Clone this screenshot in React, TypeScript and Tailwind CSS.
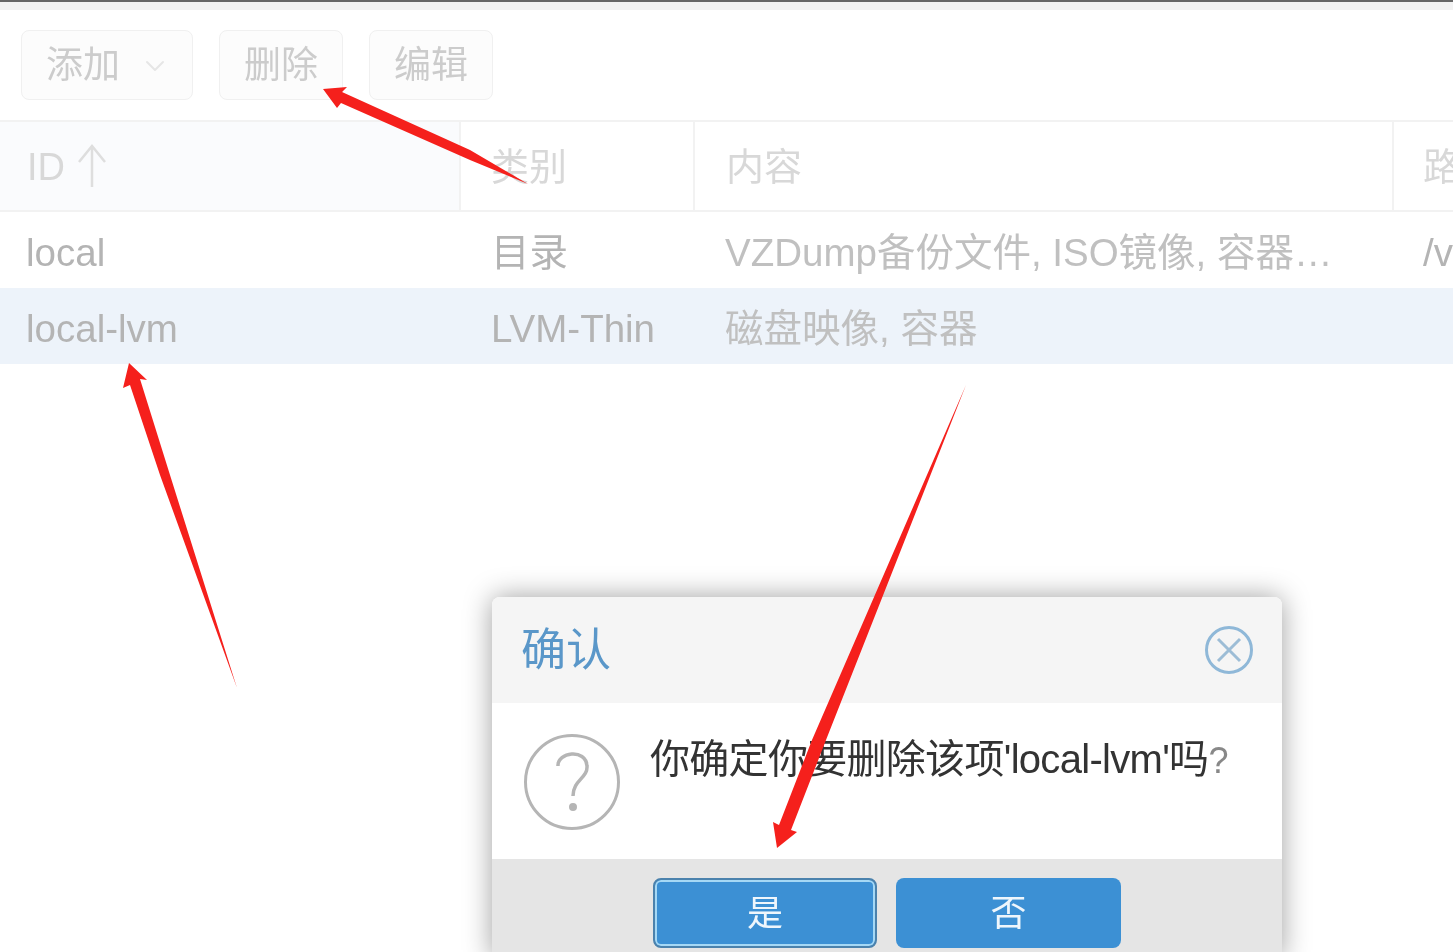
import { ChevronDown } from "lucide-react";

const gridCols = "grid grid-cols-[459px_234px_699px_1fr]";
const fontStack = "font-['Liberation_Sans','Noto_Sans_CJK_SC',sans-serif]";

function ToolButton({ label, arrow, width }: { label: string; arrow?: boolean; width: string }) {
  return (
    <div className={`${width} flex h-[70px] items-center rounded-lg border border-[#f0f0f0] bg-[#fcfcfc] pl-[24px] pt-[2px] text-[37px] text-[#cccccc]`}>
      <span>{label}</span>
      {arrow && <ChevronDown className="ml-[19px] h-[32px] w-[32px] text-[#e6e6e6]" strokeWidth={1.5} />}
    </div>
  );
}

function Row({ cells, selected }: { cells: string[]; selected?: boolean }) {
  return (
    <div className={`${gridCols} h-[76px] items-center pt-[5px] text-[38.5px] text-[#b4b4b4] ${selected ? "bg-[#edf3fa]" : "bg-white"}`}>
      <div className="overflow-hidden whitespace-nowrap pl-[26px]">{cells[0]}</div>
      <div className="overflow-hidden whitespace-nowrap pl-[32px]">{cells[1]}</div>
      <div className="overflow-hidden whitespace-nowrap pl-[32px] text-[#c0c0c0]">{cells[2]}</div>
      <div className="overflow-hidden whitespace-nowrap pl-[31px]">{cells[3]}</div>
    </div>
  );
}

function Arrows() {
  return (
    <svg className="absolute inset-0 z-20" width="1453" height="952" viewBox="0 0 1453 952">
      <polygon fill="#f5201c" points="323,89 347,87 342,92 470,150 528,184 470,160 341,103 337,108" />
      <polygon fill="#f5201c" points="129,363 147,380 140,379 170,475 237,688 160,475 130,385 123,388" />
      <polygon fill="#f5201c" points="966,385 826,740 791,830 797,832 777,848 773,822 779,825 812,740" />
    </svg>
  );
}

function ConfirmDialog() {
  return (
    <div className="absolute left-[492px] top-[597px] z-10 w-[790px] overflow-hidden rounded-t-lg shadow-[0_0_28px_rgba(0,0,0,0.38)]">
      <div className="flex h-[106px] items-center justify-between bg-[#f5f5f5] pl-[29px] pr-[28px]">
        <span className="pt-[2px] text-[45px] text-[#5a97c9]">确认</span>
        <svg width="50" height="50" viewBox="0 0 50 50" fill="none" stroke="#8fb8d8" strokeWidth="3">
          <circle cx="25" cy="25" r="22.5" />
          <path d="M14 14 L36 36 M36 14 L14 36" stroke="#9dbdd6" />
        </svg>
      </div>
      <div className="flex h-[156px] bg-white pl-[32px] pt-[31px]">
        <svg width="96" height="96" viewBox="0 0 96 96" fill="none" stroke="#b5b5b5" strokeWidth="3">
          <circle cx="48" cy="48" r="46.5" />
          <path d="M34 32 C33 18 62 14 63 32 C64 44 49 46 49 62" strokeWidth="3.5" />
          <circle cx="49" cy="73" r="2.5" fill="#b5b5b5" />
        </svg>
        <div className="ml-[30px] -mt-[2px] whitespace-nowrap text-[40px] leading-[54px] tracking-[-0.7px] text-[#333333]">
          你确定你要删除该项'local-lvm'吗<span className="text-[36px] text-[#888888]">?</span>
        </div>
      </div>
      <div className="flex h-[100px] justify-center gap-[19px] bg-[#e5e5e5] pt-[19px]">
        <div className="flex h-[70px] w-[224px] items-center justify-center rounded-lg border-2 border-[#4b82ad] bg-[#3c90d4] pt-[2px] text-[36px] text-[#eef6fc] shadow-[inset_0_0_0_2px_#a5d8f5]">是</div>
        <div className="flex h-[70px] w-[225px] items-center justify-center rounded-lg bg-[#3c90d4] pt-[2px] text-[36px] text-[#eef6fc]">否</div>
      </div>
    </div>
  );
}

export default function App() {
  return (
    <div className={`${fontStack} relative h-[952px] w-[1453px] overflow-hidden bg-white blur-[0.7px]`}>
      <div className="h-[2px] bg-[#666666]" />
      <div className="h-[8px] bg-[#f2f2f2]" />

      {/* toolbar */}
      <div className="flex h-[110px] gap-[26px] pl-[21px] pt-[20px]">
        <ToolButton label="添加" arrow width="w-[172px]" />
        <ToolButton label="删除" width="w-[124px]" />
        <ToolButton label="编辑" width="w-[124px]" />
      </div>

      {/* table header */}
      <div className={`${gridCols} h-[92px] border-y-2 border-[#f2f2f2] text-[38px] text-[#d8d8d8]`}>
        <div className="flex items-center bg-[#fafbfd] pl-[27px] pt-[2px]">
          ID
          <svg className="ml-[12px] -mt-[2px]" width="30" height="44" viewBox="0 0 30 44" fill="none" stroke="#dedede" strokeWidth="2.5">
            <path d="M15 2 V43 M2 18 L15 2 L28 18" />
          </svg>
        </div>
        <div className="flex items-center border-l-2 border-[#f2f2f2] pl-[30px] pt-[2px]">类别</div>
        <div className="flex items-center border-l-2 border-[#f2f2f2] pl-[31px] pt-[2px]">内容</div>
        <div className="flex items-center overflow-hidden whitespace-nowrap border-l-2 border-[#f2f2f2] pl-[29px] pt-[2px]">路径</div>
      </div>

      <Row cells={["local", "目录", "VZDump备份文件, ISO镜像, 容器…", "/var/lib/vz"]} />
      <Row cells={["local-lvm", "LVM-Thin", "磁盘映像, 容器", ""]} selected />

      <ConfirmDialog />
      <Arrows />
    </div>
  );
}
